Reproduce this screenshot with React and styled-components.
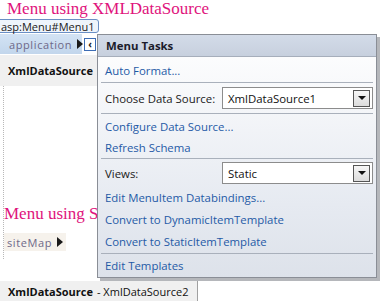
import React from 'react';
import styled, { createGlobalStyle } from 'styled-components';

const GlobalStyle = createGlobalStyle`
  html, body {
    margin: 0;
    padding: 0;
    background: #ffffff;
  }
  body {
    width: 382px;
    height: 301px;
    overflow: hidden;
    font-family: "Open Sans", "Noto Sans", sans-serif;
  }
`;

const ui = `"Open Sans", "Noto Sans", sans-serif`;

const Surface = styled.div`
  position: relative;
  width: 382px;
  height: 301px;
  overflow: hidden;
`;

const Heading = styled.div`
  font-family: "Liberation Serif", serif;
  font-size: 17px;
  line-height: 18px;
  color: #e0137c;
  white-space: nowrap;
  padding-left: ${(p) => p.$indent}px;
  height: ${(p) => p.$h}px;
`;

const Tag = styled.div`
  width: fit-content;
  margin-left: -4px;
  margin-top: 1px;
  height: 14px;
  line-height: 13px;
  padding: 0 3px 0 4px;
  border: 1px solid #6a8fc4;
  border-radius: 0 3px 3px 0;
  background: #eef4fb;
  font-family: ${ui};
  font-size: 11px;
  color: #1a1a1a;
  box-sizing: border-box;
`;

const MenuRow = styled.div`
  display: flex;
  align-items: center;
  height: 20px;
  margin-top: 1px;
`;

const MenuItem = styled.div`
  display: flex;
  align-items: center;
  gap: 5px;
  height: ${(p) => p.$h}px;
  width: ${(p) => p.$w}px;
  box-sizing: border-box;
  padding-left: ${(p) => p.$pad}px;
  background: ${(p) => p.$bg};
  font-family: ${ui};
  font-size: 11px;
  letter-spacing: 0.6px;
  color: #6e6888;
`;

const Arrow = styled.span`
  width: 0;
  height: 0;
  border-top: 5px solid transparent;
  border-bottom: 5px solid transparent;
  border-left: 6px solid #1a1a1a;
`;

const SmartTag = styled.div`
  width: 12px;
  height: 13px;
  margin-left: 2px;
  border: 1px solid #3c6cb4;
  background: #ffffff;
  box-sizing: border-box;
  display: flex;
  align-items: center;
  justify-content: center;
  font-family: ${ui};
  font-size: 10px;
  font-weight: bold;
  line-height: 1;
  color: #1a1a1a;
`;

const SourceBox = styled.div`
  display: flex;
  align-items: center;
  height: ${(p) => p.$h}px;
  width: ${(p) => p.$w}px;
  margin-top: ${(p) => p.$mt}px;
  box-sizing: border-box;
  padding-left: 8px;
  background: #f0f0f0;
  border-right: 1px solid #a0a0a0;
  font-family: ${ui};
  font-size: 11px;
  white-space: nowrap;
  color: #111;
  b {
    font-weight: 700;
    margin-right: 4px;
  }
`;

const DesignArea = styled.div`
  margin-left: 3px;
  border-left: 1px dotted #b8b8b8;
  height: 173px;
  display: flex;
  flex-direction: column;
  justify-content: flex-end;
  padding-bottom: 8px;
  box-sizing: border-box;
`;

const Panel = styled.div`
  position: absolute;
  left: 97px;
  top: 34px;
  width: 280px;
  height: 244px;
  box-sizing: border-box;
  border: 1px solid #8a8e96;
  background: linear-gradient(#ffffff, #e6eaf1 70%, #dde2ea);
  box-shadow: 3px 3px 0 rgba(120, 124, 132, 0.55);
  font-family: ${ui};
  font-size: 11.4px;
  display: flex;
  flex-direction: column;
`;

const PanelHeader = styled.div`
  height: 22px;
  flex: none;
  box-sizing: border-box;
  padding-left: 8px;
  display: flex;
  align-items: center;
  background: linear-gradient(#d3dbe8, #c7d0de);
  border-bottom: 1px solid #a6aebb;
  font-weight: 700;
  color: #1b1b2a;
`;

const PanelBody = styled.div`
  padding: 2px 3px 0 3px;
  display: flex;
  flex-direction: column;
`;

const LinkRow = styled.div`
  height: ${(p) => p.$h || 22}px;
  display: flex;
  align-items: center;
  padding-left: 4px;
  color: #1f5aa6;
  white-space: nowrap;
`;

const Separator = styled.div`
  height: 1px;
  margin: 1px 0;
  background: #a9b0bb;
`;

const FieldRow = styled.div`
  height: ${(p) => p.$h}px;
  display: flex;
  align-items: center;
  justify-content: space-between;
  padding-left: 4px;
  color: #1a1a1a;
  white-space: nowrap;
`;

const Select = styled.div`
  flex: none;
  width: 151px;
  height: 22px;
  box-sizing: border-box;
  border: 1px solid #8c8c8c;
  background: #ffffff;
  display: flex;
  align-items: center;
  justify-content: space-between;
  padding: 0 2px 0 5px;
  color: #111;
`;

const DropButton = styled.div`
  width: 17px;
  height: 17px;
  box-sizing: border-box;
  border: 1px solid #555;
  background: linear-gradient(#f6f6f6, #dcdcdc);
  display: flex;
  align-items: center;
  justify-content: center;
  &::after {
    content: '';
    width: 0;
    height: 0;
    border-left: 4px solid transparent;
    border-right: 4px solid transparent;
    border-top: 4px solid #111;
  }
`;

export default function App() {
  return (
    <>
      <GlobalStyle />
      <Surface>
        <Heading $indent={7} $h={18}>Menu using XMLDataSource</Heading>
        <Tag>asp:Menu#Menu1</Tag>
        <MenuRow>
          <MenuItem $h={20} $w={82} $pad={9} $bg="linear-gradient(#d3e3f4, #c2d6ec)">
            application <Arrow />
          </MenuItem>
          <SmartTag>&lsaquo;</SmartTag>
        </MenuRow>
        <SourceBox $h={31} $w={98} $mt={1}>
          <b>XmlDataSource</b>
        </SourceBox>
        <DesignArea>
          <Heading $indent={0} $h={28}>Menu using SiteMapDataSource</Heading>
          <MenuItem $h={18} $w={62} $pad={3} $bg="#f6f2ec">
            siteMap <Arrow />
          </MenuItem>
        </DesignArea>
        <SourceBox $h={20} $w={198} $mt={22}>
          <b>XmlDataSource</b> - XmlDataSource2
        </SourceBox>

        <Panel>
          <PanelHeader>Menu Tasks</PanelHeader>
          <PanelBody>
            <LinkRow $h={22}>Auto Format...</LinkRow>
            <Separator />
            <FieldRow $h={28}>
              Choose Data Source:
              <Select>
                XmlDataSource1
                <DropButton />
              </Select>
            </FieldRow>
            <Separator />
            <LinkRow $h={23}>Configure Data Source...</LinkRow>
            <LinkRow $h={19}>Refresh Schema</LinkRow>
            <Separator />
            <FieldRow $h={26}>
              Views:
              <Select>
                Static
                <DropButton />
              </Select>
            </FieldRow>
            <LinkRow>Edit MenuItem Databindings...</LinkRow>
            <LinkRow>Convert to DynamicItemTemplate</LinkRow>
            <LinkRow>Convert to StaticItemTemplate</LinkRow>
            <Separator />
            <LinkRow $h={20}>Edit Templates</LinkRow>
          </PanelBody>
        </Panel>
      </Surface>
    </>
  );
}
